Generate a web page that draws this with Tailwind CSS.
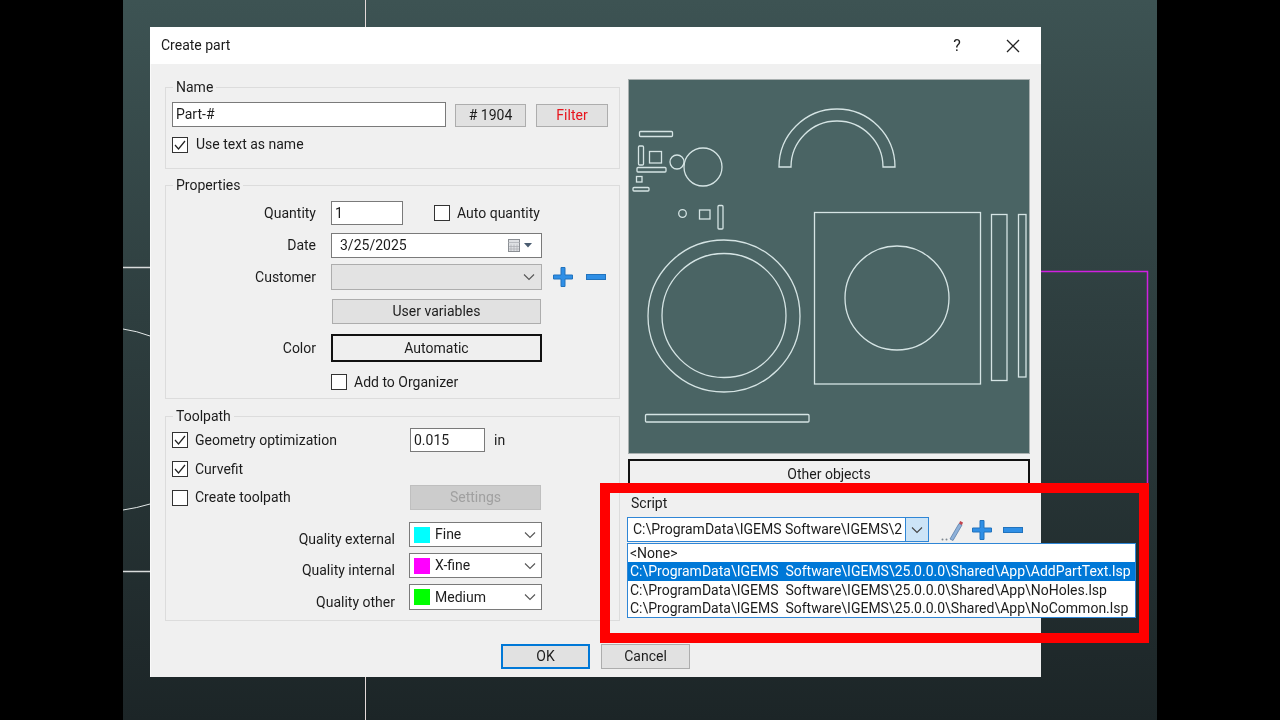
<!DOCTYPE html>
<html>
<head>
<meta charset="utf-8">
<script src="https://cdn.jsdelivr.net/npm/@tailwindcss/browser@4"></script>
</head>
<body class="bg-black m-0">
<div class="w-[1280px] h-[720px] overflow-hidden flex justify-center bg-black font-['Roboto','Liberation_Sans',sans-serif] text-[14px] text-[#1c1c1c] blur-[0.35px]">
  <div class="relative w-[1034px] h-[720px] bg-gradient-to-b from-[#3d5353] to-[#1c2527]">
    <!-- CAD canvas behind the dialog -->
    <svg class="absolute left-0 top-0" width="1034" height="720" viewBox="123 0 1034 720" fill="none">
      <path d="M365.500 0V720" stroke="#e4d9d9" stroke-width="1"/>
      <path d="M123 267.500H150M123 571.500H150" stroke="#d9dcdc" stroke-width="1.300"/>
      <path d="M123 329Q137 331 150 336M123 510Q137 508 150 504" stroke="#e3e8e8" stroke-width="1"/>
      <path d="M1041 271.500H1147.500V640" stroke="#d020e0" stroke-width="1.500"/>
    </svg>

    <!-- Dialog window -->
    <div class="absolute left-[27px] top-[27px] w-[891px] h-[650px] bg-[#f0f0f0] shadow-[inset_1px_0_0_#fafafa]">
      <div class="h-[37px] bg-white flex items-center pl-[11px]">
        <span class="text-[14px] text-[#1a1a1a] flex-1">Create part</span>
        <span class="text-[16px] w-[20px] text-center">?</span>
        <svg class="ml-[39px] mr-[21px]" width="14" height="14" viewBox="0 0 14 14" fill="none" stroke="#222" stroke-width="1.300"><path d="M1 1L13 13M13 1L1 13"/></svg>
      </div>

      <div class="flex pl-[15px] pt-[15px]">
        <!-- Left column -->
        <div class="w-[455px] mt-[8px] flex flex-col">
          <!-- Name -->
          <div class="relative h-[82px] border border-[#dcdcdc] pl-[6px] pt-[14px]">
            <span class="absolute left-[7px] -top-[10px] bg-[#f0f0f0] px-[3px] leading-[18px]">Name</span>
            <div class="flex items-end">
              <div class="w-[274px] h-[25px] bg-white border border-[#7a7a7a] flex items-center pl-[3px]">Part-#</div>
              <div class="ml-[9px] w-[71px] h-[23px] bg-[#e1e1e1] border border-[#adadad] flex items-center justify-center">#&nbsp;1904</div>
              <div class="ml-[10px] w-[72px] h-[23px] bg-[#e1e1e1] border border-[#adadad] flex items-center justify-center text-[#e8141c]">Filter</div>
            </div>
            <div class="flex items-center mt-[9px] h-[17px]">
              <span class="w-[16px] h-[16px] bg-white border border-[#333] flex items-center justify-center"><svg width="12" height="12" viewBox="0 0 12 12" fill="none" stroke="#222" stroke-width="1.200"><path d="M1 6L4.500 10L11 2"/></svg></span>
              <span class="ml-[8px]">Use text as name</span>
            </div>
          </div>

          <!-- Properties -->
          <div class="relative mt-[16px] h-[214px] border border-[#dcdcdc] pt-[15px]">
            <span class="absolute left-[7px] -top-[10px] bg-[#f0f0f0] px-[3px] leading-[18px]">Properties</span>
            <div class="flex items-center h-[24px]">
              <span class="w-[150px] text-right">Quantity</span>
              <div class="ml-[15px] w-[72px] h-[24px] bg-white border border-[#7a7a7a] flex items-center pl-[3px]">1</div>
              <span class="ml-[31px] w-[16px] h-[16px] bg-white border border-[#333]"></span>
              <span class="ml-[7px]">Auto quantity</span>
            </div>
            <div class="flex items-center h-[25px] mt-[8px]">
              <span class="w-[150px] text-right">Date</span>
              <div class="ml-[15px] w-[211px] h-[25px] bg-white border border-[#7a7a7a] flex items-center pl-[8px] pr-[6px]">
                <span class="flex-1">3/25/2025</span>
                <svg width="28" height="16" viewBox="0 0 28 16" fill="none"><rect x="1.500" y="1.500" width="11" height="12" fill="#dfe1e4" stroke="#8b8f94"/><path d="M1 4.500H13M4 6.500V13M7 6.500V13M10 6.500V13M2 8.500H12M2 11H12" stroke="#a9acb1" stroke-width="0.700"/><path d="M17 5H25L21 9.500Z" fill="#4a5c70"/></svg>
              </div>
            </div>
            <div class="flex items-center h-[26px] mt-[6px]">
              <span class="w-[150px] text-right">Customer</span>
              <div class="ml-[15px] w-[211px] h-[26px] bg-[#e3e3e3] border border-[#adadad] flex items-center justify-end pr-[6px]">
                <svg width="12" height="8" viewBox="0 0 12 8" fill="none" stroke="#555" stroke-width="1.100"><path d="M1 1.500L6 6.500L11 1.500"/></svg>
              </div>
              <svg class="ml-[11px]" width="20" height="20" viewBox="0 0 20 20"><path d="M8 .500H12V8H19.500V12H12V19.500H8V12H.500V8H8Z" fill="#2f8fe6" stroke="#2273bd" stroke-width="1"/></svg>
              <svg class="ml-[13px]" width="20" height="8" viewBox="0 0 20 8"><rect x=".500" y="1.500" width="19" height="5" fill="#2f8fe6" stroke="#2273bd"/></svg>
            </div>
            <div class="ml-[166px] w-[209px] h-[25px] mt-[9px] bg-[#e1e1e1] border border-[#adadad] flex items-center justify-center">User variables</div>
            <div class="flex items-center h-[28px] mt-[10px]">
              <span class="w-[150px] text-right">Color</span>
              <div class="ml-[15px] w-[211px] h-[28px] bg-[#efefef] border-2 border-[#111] flex items-center justify-center">Automatic</div>
            </div>
            <div class="flex items-center h-[16px] mt-[12px] ml-[165px]">
              <span class="w-[16px] h-[16px] bg-white border border-[#333]"></span>
              <span class="ml-[7px]">Add to Organizer</span>
            </div>
          </div>

          <!-- Toolpath -->
          <div class="relative mt-[17px] h-[205px] border border-[#dcdcdc] pl-[6px] pt-[11px]">
            <span class="absolute left-[7px] -top-[10px] bg-[#f0f0f0] px-[3px] leading-[18px]">Toolpath</span>
            <div class="flex items-center h-[24px]">
              <div class="w-[238px] flex items-center">
                <span class="w-[16px] h-[16px] bg-white border border-[#333] flex items-center justify-center"><svg width="12" height="12" viewBox="0 0 12 12" fill="none" stroke="#222" stroke-width="1.200"><path d="M1 6L4.500 10L11 2"/></svg></span>
                <span class="ml-[7px]">Geometry optimization</span>
              </div>
              <div class="w-[75px] h-[24px] bg-white border border-[#7a7a7a] flex items-center pl-[3px]">0.015</div>
              <span class="ml-[9px]">in</span>
            </div>
            <div class="flex items-center h-[16px] mt-[9px]">
              <span class="w-[16px] h-[16px] bg-white border border-[#333] flex items-center justify-center"><svg width="12" height="12" viewBox="0 0 12 12" fill="none" stroke="#222" stroke-width="1.200"><path d="M1 6L4.500 10L11 2"/></svg></span>
              <span class="ml-[7px]">Curvefit</span>
            </div>
            <div class="flex items-center h-[25px] mt-[8px]">
              <div class="w-[238px] flex items-center">
                <span class="w-[16px] h-[16px] bg-white border border-[#333]"></span>
                <span class="ml-[7px]">Create toolpath</span>
              </div>
              <div class="w-[131px] h-[25px] bg-[#cccccc] border border-[#bfbfbf] flex items-center justify-center text-[#a0a0a0]">Settings</div>
            </div>
            <div class="flex items-center h-[25px] mt-[12px]">
              <span class="w-[223px] text-right pt-[10px]">Quality external</span>
              <div class="ml-[14px] w-[133px] h-[25px] bg-white border border-[#7a7a7a] flex items-center pl-[4px] pr-[5px]">
                <span class="w-[16px] h-[16px] bg-[#00ffff]"></span><span class="ml-[5px] flex-1">Fine</span>
                <svg width="12" height="8" viewBox="0 0 12 8" fill="none" stroke="#555" stroke-width="1.100"><path d="M1 1.500L6 6.500L11 1.500"/></svg>
              </div>
            </div>
            <div class="flex items-center h-[25px] mt-[6px]">
              <span class="w-[223px] text-right pt-[10px]">Quality internal</span>
              <div class="ml-[14px] w-[133px] h-[25px] bg-white border border-[#7a7a7a] flex items-center pl-[4px] pr-[5px]">
                <span class="w-[16px] h-[16px] bg-[#ff00ff]"></span><span class="ml-[5px] flex-1">X-fine</span>
                <svg width="12" height="8" viewBox="0 0 12 8" fill="none" stroke="#555" stroke-width="1.100"><path d="M1 1.500L6 6.500L11 1.500"/></svg>
              </div>
            </div>
            <div class="flex items-center h-[26px] mt-[6px]">
              <span class="w-[223px] text-right pt-[10px]">Quality other</span>
              <div class="ml-[14px] w-[133px] h-[26px] bg-white border border-[#7a7a7a] flex items-center pl-[4px] pr-[5px]">
                <span class="w-[16px] h-[16px] bg-[#00ff00]"></span><span class="ml-[5px] flex-1">Medium</span>
                <svg width="12" height="8" viewBox="0 0 12 8" fill="none" stroke="#555" stroke-width="1.100"><path d="M1 1.500L6 6.500L11 1.500"/></svg>
              </div>
            </div>
          </div>
        </div>

        <!-- Right column -->
        <div class="ml-[8px] w-[402px] flex flex-col">
          <div class="h-[375px] bg-[#4a6464] border border-[#a9b0b0]">
            <svg class="block" width="400" height="373" viewBox="629 80 400 373" fill="none" stroke="#d5e4e4" stroke-width="1.300">
              <rect x="639.500" y="131.500" width="33" height="5" rx="1"/>
              <rect x="638.500" y="146" width="5" height="19" rx="1"/>
              <rect x="649.500" y="151.500" width="12" height="11.500"/>
              <circle cx="677" cy="162" r="7"/>
              <circle cx="703" cy="167" r="19"/>
              <rect x="637" y="167.500" width="29" height="4.500" rx="1"/>
              <rect x="636.500" y="176.500" width="5.500" height="5.500"/>
              <rect x="633" y="187.500" width="16" height="3.500" rx="1"/>
              <circle cx="682.500" cy="213.500" r="3.800"/>
              <rect x="699.500" y="210" width="10.500" height="9"/>
              <rect x="718" y="205.500" width="5" height="23.500" rx="1"/>
              <path d="M779 167A58 58 0 0 1 895 167H883A46 46 0 0 0 791 167Z"/>
              <rect x="814.500" y="212.500" width="166" height="171.500"/>
              <circle cx="897" cy="298" r="52"/>
              <rect x="991.500" y="214.500" width="15.500" height="166"/>
              <rect x="1018.500" y="214.500" width="7.500" height="162.500"/>
              <circle cx="724" cy="316" r="76"/>
              <circle cx="724" cy="315.500" r="62"/>
              <rect x="645.500" y="414.500" width="163.500" height="7.500" rx="1"/>
            </svg>
          </div>
          <div class="mt-[5px] h-[29px] border-2 border-[#111] border-b-0 flex items-center justify-center">Other objects</div>
          <div class="mt-[4px] h-[22px] pl-[3px] leading-[22px]">Script</div>
          <div class="relative -ml-px mt-[3px] flex items-center h-[25px]">
            <div class="w-[302px] h-[25px] bg-white border border-[#2f86d6] flex items-center pl-[5px]">
              <span class="flex-1 whitespace-nowrap overflow-hidden">C:\ProgramData\IGEMS Software\IGEMS\2</span>
              <span class="w-[23px] h-[23px] bg-[#cce4f7] border-l border-[#2f86d6] flex items-center justify-center shrink-0"><svg width="12" height="8" viewBox="0 0 12 8" fill="none" stroke="#444" stroke-width="1.100"><path d="M1 1.500L6 6.500L11 1.500"/></svg></span>
            </div>
            <svg class="ml-[12px]" width="23" height="24" viewBox="0 0 23 24" fill="none"><circle cx="1.500" cy="21.500" r="1" fill="#7d8790"/><circle cx="5.500" cy="21.500" r="1" fill="#7d8790"/><path d="M9 21L18 5.500L21 7L12 22.500Z" fill="#8db1da" stroke="#5c7fa8" stroke-width="0.800"/><path d="M18 5.500L19.200 3L22 4.500L21 7Z" fill="#c2444e"/></svg>
            <svg class="ml-[8px]" width="20" height="20" viewBox="0 0 20 20"><path d="M8 .500H12V8H19.500V12H12V19.500H8V12H.500V8H8Z" fill="#2f8fe6" stroke="#2273bd" stroke-width="1"/></svg>
            <svg class="ml-[11px]" width="20" height="8" viewBox="0 0 20 8"><rect x=".500" y="1.500" width="19" height="5" fill="#2f8fe6" stroke="#2273bd"/></svg>
            <!-- Open dropdown list -->
            <div class="absolute left-0 top-[26px] w-[509px] h-[75px] bg-white border border-[#2f86d6] z-10 flex flex-col leading-[18.250px] whitespace-nowrap">
              <div class="pl-[2px]">&lt;None&gt;</div>
              <div class="pl-[2px] bg-[#0078d7] text-white">C:\ProgramData\IGEMS&nbsp; Software\IGEMS\25.0.0.0\Shared\App\AddPartText.lsp</div>
              <div class="pl-[2px]">C:\ProgramData\IGEMS&nbsp; Software\IGEMS\25.0.0.0\Shared\App\NoHoles.lsp</div>
              <div class="pl-[2px]">C:\ProgramData\IGEMS&nbsp; Software\IGEMS\25.0.0.0\Shared\App\NoCommon.lsp</div>
            </div>
          </div>
        </div>
      </div>

      <!-- Footer buttons -->
      <div class="flex pl-[351px] mt-[23px]">
        <div class="w-[89px] h-[25px] bg-[#e1e1e1] border-2 border-[#0078d7] flex items-center justify-center">OK</div>
        <div class="ml-[11px] w-[89px] h-[25px] bg-[#e1e1e1] border border-[#adadad] flex items-center justify-center">Cancel</div>
      </div>
    </div>

    <!-- Red annotation frame -->
    <div class="absolute left-[477px] top-[483px] w-[549px] h-[160px] border-[10px] border-[#ff0000] z-20"></div>
  </div>
</div>
</body>
</html>
